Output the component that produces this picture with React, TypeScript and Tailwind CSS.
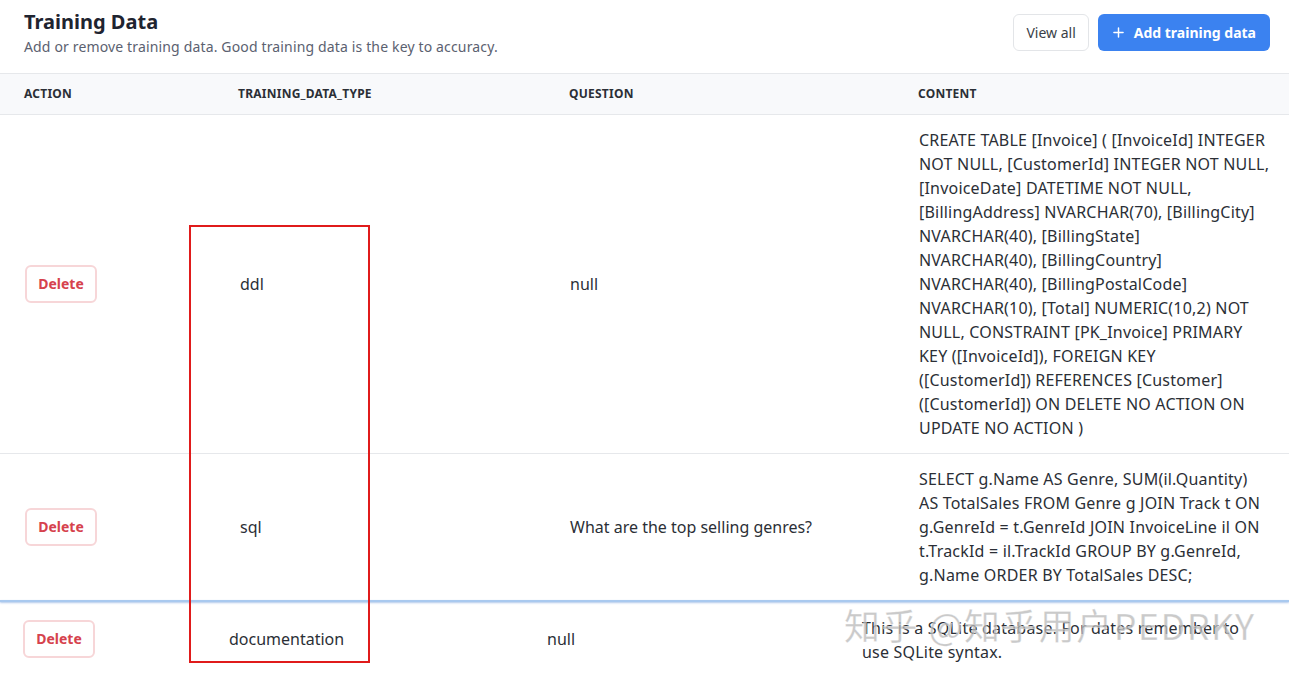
import React from 'react';

type Row = { type: string; question: string; content: string[] };

// content is kept in the same line breaks as the captured table
const rows: Row[] = [
  {
    type: 'ddl',
    question: 'null',
    content: [
      'CREATE TABLE [Invoice] ( [InvoiceId] INTEGER',
      'NOT NULL, [CustomerId] INTEGER NOT NULL,',
      '[InvoiceDate] DATETIME NOT NULL,',
      '[BillingAddress] NVARCHAR(70), [BillingCity]',
      'NVARCHAR(40), [BillingState]',
      'NVARCHAR(40), [BillingCountry]',
      'NVARCHAR(40), [BillingPostalCode]',
      'NVARCHAR(10), [Total] NUMERIC(10,2) NOT',
      'NULL, CONSTRAINT [PK_Invoice] PRIMARY',
      'KEY ([InvoiceId]), FOREIGN KEY',
      '([CustomerId]) REFERENCES [Customer]',
      '([CustomerId]) ON DELETE NO ACTION ON',
      'UPDATE NO ACTION )',
    ],
  },
  {
    type: 'sql',
    question: 'What are the top selling genres?',
    content: [
      'SELECT g.Name AS Genre, SUM(il.Quantity)',
      'AS TotalSales FROM Genre g JOIN Track t ON',
      'g.GenreId = t.GenreId JOIN InvoiceLine il ON',
      't.TrackId = il.TrackId GROUP BY g.GenreId,',
      'g.Name ORDER BY TotalSales DESC;',
    ],
  },
];

const DeleteButton: React.FC = () => (
  <button className="w-[72px] h-[38px] rounded-md border-2 border-[#f7d6d8] bg-white text-[14px] font-bold text-[#d6424d]">
    Delete
  </button>
);

const Lines: React.FC<{ lines: string[] }> = ({ lines }) => (
  <div className="whitespace-nowrap tracking-[0.2px]">
    {lines.map((l, i) => (<div key={i}>{l}</div>))}
  </div>
);

export default function App() {
  return (
    <div className="relative w-[1289px] h-[675px] overflow-hidden bg-white text-[#2b2f36]" style={{ fontFamily: '"Noto Sans", "Open Sans", sans-serif' }}>
      {/* header */}
      <div className="flex items-start justify-between h-[73px] pl-6 pr-[19px]">
        <div className="mt-[8px]">
          <h1 className="text-[20px] leading-[28px] font-bold text-[#1f2430]">Training Data</h1>
          <p className="mt-[1px] text-[14px] leading-[20px] tracking-[0.15px] text-[#5b6170]">Add or remove training data. Good training data is the key to accuracy.</p>
        </div>
        <div className="flex items-center gap-[9px] mt-[14px]">
          <button className="h-[37px] px-3 rounded-md border border-[#e3e5e8] bg-white text-[14px] text-[#3a3f47]">View all</button>
          <button className="flex items-center gap-[10px] h-[37px] pl-[15px] pr-[14px] rounded-md bg-[#3b82f0] text-[14px] font-bold text-white">
            <svg width="11" height="11" viewBox="0 0 12 12" fill="none" stroke="currentColor" strokeWidth="1.6" strokeLinecap="round">
              <path d="M6 1v10M1 6h10" />
            </svg>
            Add training data
          </button>
        </div>
      </div>

      {/* table head */}
      <div className="grid grid-cols-[214px_331px_349px_1fr] h-[42px] items-center border-y border-[#e6e8eb] bg-[#f8f9fb] text-[12px] font-bold tracking-[0.02em] text-[#2b2f36]">
        <div className="pl-6">ACTION</div>
        <div className="pl-6">TRAINING_DATA_TYPE</div>
        <div className="pl-6">QUESTION</div>
        <div className="pl-6">CONTENT</div>
      </div>

      {/* body */}
      {rows.map((r, i) => (
        <div key={i} className={`grid grid-cols-[214px_331px_349px_1fr] items-center text-[16px] leading-[24px] ${i === 0 ? 'border-b border-[#e6e8eb]' : ''}`}>
          <div className="pl-[25px]"><DeleteButton /></div>
          <div className="pl-[26px]">{r.type}</div>
          <div className="pl-[25px]">{r.question}</div>
          <div className="pl-[25px] pt-[13px] pb-[13px]"><Lines lines={r.content} /></div>
        </div>
      ))}

      {/* third row from another capture */}
      <div className="h-[2px] bg-[#a9c9ef] shadow-[0_1px_2px_rgba(120,160,220,0.6)]" />
      <div className="grid grid-cols-[206px_318px_315px_1fr] items-center text-[16px] leading-[24px]">
        <div className="pl-[23px]"><DeleteButton /></div>
        <div className="pl-[23px]">documentation</div>
        <div className="pl-[23px]">null</div>
        <div className="pl-[23px] pt-[14px] pb-[12px]">
          <Lines lines={['This is a SQLite database. For dates remember to', 'use SQLite syntax.']} />
        </div>
      </div>

      {/* red annotation box */}
      <div className="absolute left-[189px] top-[225px] w-[181px] h-[438px] border-2 border-[#e01b1b]" />

      {/* watermark */}
      <div
        className="absolute left-[844px] top-[600px] text-[36px] leading-[48px] tracking-[0.04em] text-[rgba(185,185,185,0.75)] whitespace-nowrap pointer-events-none"
        style={{ fontFamily: '"Noto Sans CJK SC", "Noto Sans", sans-serif', WebkitTextStroke: '0.5px rgba(255,255,255,0.6)' }}
      >
        知乎 @知乎用户PEDRKY
      </div>
    </div>
  );
}
